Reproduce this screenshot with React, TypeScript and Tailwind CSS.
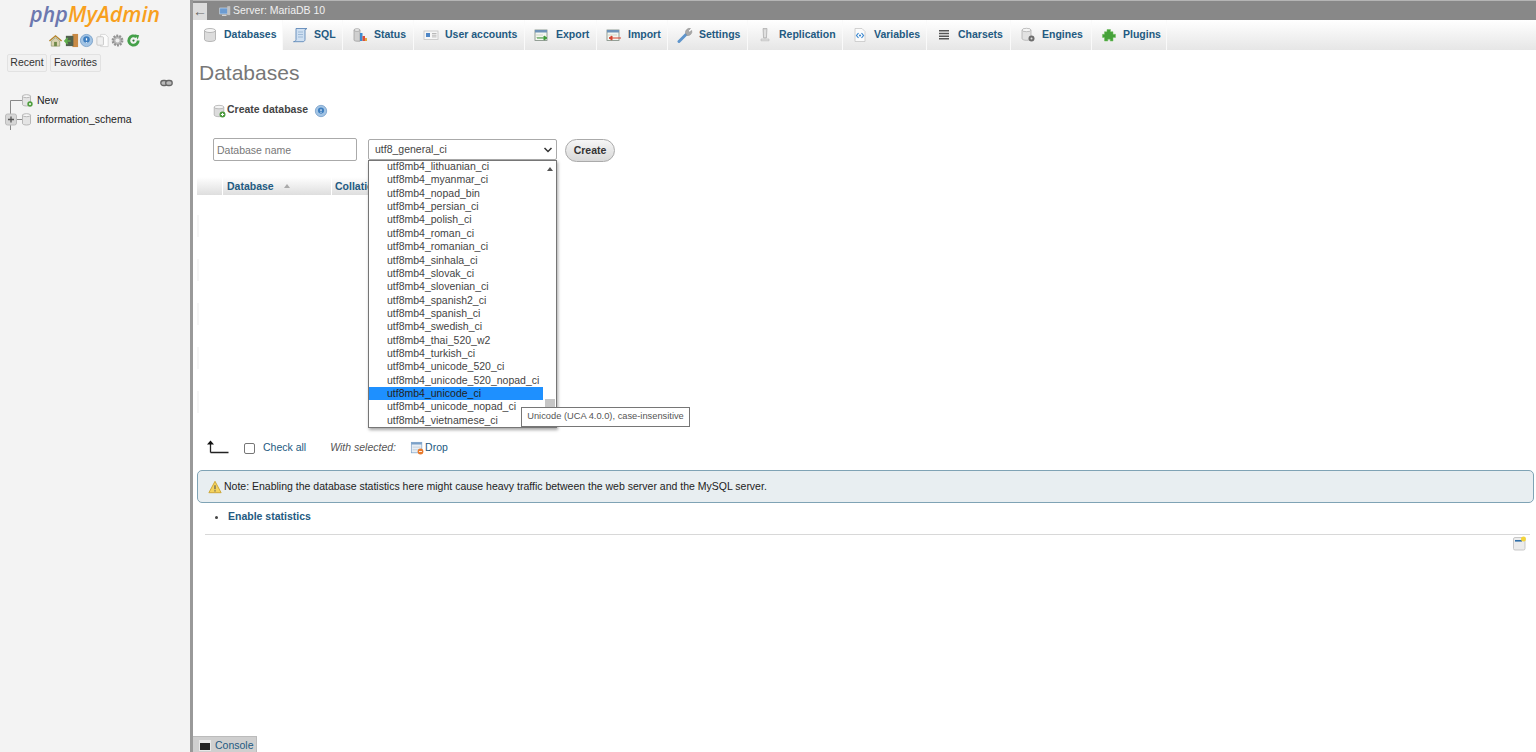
import type { ReactNode } from "react";

const collations = [
  "utf8mb4_lithuanian_ci",
  "utf8mb4_myanmar_ci",
  "utf8mb4_nopad_bin",
  "utf8mb4_persian_ci",
  "utf8mb4_polish_ci",
  "utf8mb4_roman_ci",
  "utf8mb4_romanian_ci",
  "utf8mb4_sinhala_ci",
  "utf8mb4_slovak_ci",
  "utf8mb4_slovenian_ci",
  "utf8mb4_spanish2_ci",
  "utf8mb4_spanish_ci",
  "utf8mb4_swedish_ci",
  "utf8mb4_thai_520_w2",
  "utf8mb4_turkish_ci",
  "utf8mb4_unicode_520_ci",
  "utf8mb4_unicode_520_nopad_ci",
  "utf8mb4_unicode_ci",
  "utf8mb4_unicode_nopad_ci",
  "utf8mb4_vietnamese_ci",
];

function Svg({ size = 14, children, className = "" }: { size?: number; children: ReactNode; className?: string }) {
  return (
    <svg width={size} height={size} viewBox="0 0 16 16" className={`shrink-0 ${className}`}>
      {children}
    </svg>
  );
}

function DbShape() {
  return (
    <>
      <path d="M2.500 3.500v9c0 1.200 2.400 2 5.500 2s5.500-.8 5.500-2v-9z" fill="#dcdcdc" stroke="#a8a8a8" strokeWidth="0.8" />
      <ellipse cx="8" cy="3.500" rx="5.500" ry="2" fill="#f4f4f4" stroke="#a8a8a8" strokeWidth="0.8" />
    </>
  );
}

function DbNewIcon({ size = 14 }: { size?: number }) {
  return (
    <Svg size={size} className="mt-[2px]">
      <DbShape />
      <circle cx="12" cy="12" r="3.400" fill="#4c9a3c" />
      <path d="M10.200 12h3.600M12 10.200v3.600" stroke="#fff" strokeWidth="1.200" />
    </Svg>
  );
}

const tabIcons: Record<string, ReactNode> = {
  Databases: <DbShape />,
  SQL: (
    <>
      <path d="M4 1.500h11l-2 1.200v10c0 1-1 2-2 2H1.500c1 0 2.500-1 2.500-2z" fill="#cfe0f2" stroke="#5f88b8" strokeWidth="0.9" />
      <path d="M6 5h5M6 7.500h5M6 10h5" stroke="#8aa9cc" strokeWidth="0.7" />
    </>
  ),
  Status: (
    <>
      <path d="M2 3v10c0 .8 1.300 1.200 3 1.200h3V3z" fill="#cfcfcf" stroke="#9a9a9a" strokeWidth="0.7" />
      <ellipse cx="5" cy="3" rx="3" ry="1.300" fill="#eee" stroke="#9a9a9a" strokeWidth="0.7" />
      <rect x="8" y="6" width="2.500" height="8" fill="#3d8bd0" />
      <rect x="10.500" y="9" width="2.500" height="5" fill="#d9503f" />
      <rect x="13" y="11" width="2" height="3" fill="#e8a33a" />
    </>
  ),
  "User accounts": (
    <>
      <rect x="1" y="4" width="14" height="8.500" fill="#f6f6f6" stroke="#c4c4c4" strokeWidth="0.8" />
      <rect x="3" y="6" width="4" height="4" fill="#4f86c6" />
      <path d="M9 6.500h4.500M9 8.200h4.500M9 9.900h4.500" stroke="#aaa" strokeWidth="0.8" />
    </>
  ),
  Export: (
    <>
      <rect x="1" y="3" width="12" height="10.500" fill="#f4f6f0" stroke="#7d8a80" strokeWidth="0.8" />
      <rect x="1" y="3" width="12" height="2.500" fill="#6f93b8" />
      <path d="M2 8h7M2 10.500h7" stroke="#c0c8b8" strokeWidth="0.7" />
      <path d="M3 11h9M10 9l3 2-3 2z" stroke="#3f9a3a" fill="#3f9a3a" strokeWidth="1" />
    </>
  ),
  Import: (
    <>
      <rect x="1" y="3" width="12" height="10.500" fill="#f4f6f0" stroke="#7d8a80" strokeWidth="0.8" />
      <rect x="1" y="3" width="12" height="2.500" fill="#6f93b8" />
      <path d="M2 8h9" stroke="#c0c8b8" strokeWidth="0.7" />
      <path d="M5 11h10M6 9l-3 2 3 2z" stroke="#d5432f" fill="#d5432f" strokeWidth="1" />
    </>
  ),
  Settings: (
    <>
      <path d="M2 14.500 9 7.500" stroke="#5f95cc" strokeWidth="3" strokeLinecap="round" />
      <path d="M8.500 6a4 4 0 0 1 5-4.500l-2.200 2.200 1.200 1.500 2.200-1.800A4 4 0 0 1 10 8.500z" fill="#a9a9a9" stroke="#888" strokeWidth="0.5" />
    </>
  ),
  Replication: (
    <>
      <path d="M6 1.500h4l-.6 9.500H6.600z" fill="#d4d4d4" stroke="#a9a9a9" strokeWidth="0.7" />
      <path d="M4 12h8v1.800H4z" fill="#e2e2e2" stroke="#b5b5b5" strokeWidth="0.6" />
      <path d="M8 3v7" stroke="#f2f2f2" strokeWidth="0.8" />
    </>
  ),
  Variables: (
    <>
      <path d="M3 1.500h7l3 3v10H3z" fill="#fbfbfb" stroke="#c6c6c6" strokeWidth="0.8" />
      <path d="M6.500 6 4.500 8.500l2 2.500M9.500 6l2 2.500-2 2.500" fill="none" stroke="#3c88d0" strokeWidth="1.200" />
      <circle cx="8" cy="8.500" r="1.100" fill="#3c88d0" />
    </>
  ),
  Charsets: (
    <path d="M3 3h10v1.500H3zM3 5.700h10v1.500H3zM3 8.400h10v1.500H3zM3 11.100h10v1.500H3z" fill="#555" />
  ),
  Engines: (
    <>
      <path d="M2 3v8.500c0 1 2 1.800 4.500 1.800S11 12.500 11 11.500V3z" fill="#e2e2e2" stroke="#a8a8a8" strokeWidth="0.7" />
      <ellipse cx="6.500" cy="3" rx="4.500" ry="1.700" fill="#f6f6f6" stroke="#a8a8a8" strokeWidth="0.7" />
      <circle cx="11.500" cy="11.500" r="3" fill="#6d6d6d" />
      <circle cx="11.500" cy="11.500" r="1" fill="#ddd" />
    </>
  ),
  Plugins: (
    <path d="M6 2.500h3.500v2.200h2.500v2.600h2.500v3.200H12v3.500H9.200v-1.800H6.800V14H3.500v-3.500H1.500V7.300h2V4.700H6z" fill="#46a23a" stroke="#6ebe5e" strokeWidth="0.5" />
  ),
};

const tabs = [
  { label: "Databases", w: "w-[90px]" },
  { label: "SQL", w: "w-[60px]" },
  { label: "Status", w: "w-[71px]" },
  { label: "User accounts", w: "w-[111px]" },
  { label: "Export", w: "w-[72px]" },
  { label: "Import", w: "w-[71px]" },
  { label: "Settings", w: "w-[80px]" },
  { label: "Replication", w: "w-[95px]" },
  { label: "Variables", w: "w-[84px]" },
  { label: "Charsets", w: "w-[84px]" },
  { label: "Engines", w: "w-[81px]" },
  { label: "Plugins", w: "w-[75px]" },
];

function Sidebar() {
  return (
    <aside className="w-[190px] shrink-0 border-r-[3px] border-[#999] bg-[#f3f3f3] box-content">
      <div className="flex h-[28px] items-center justify-center text-[21.500px] font-semibold italic leading-none [font-family:'Open_Sans',sans-serif]">
        <span className="text-[#6c78af]">php</span>
        <span className="text-[#f8a01e]">MyAdmin</span>
      </div>
      <div className="mt-[5px] flex h-[15px] items-center justify-center gap-[0.6px] pr-[1px]">
        <Svg size={15}>
          <path d="M1 8 8 2l7 6-1 1-6-5-6 5z" fill="#b5852d" />
          <path d="M3.500 8.500 8 5l4.500 3.500V14h-9z" fill="#d9d2b0" stroke="#7d8a5a" strokeWidth="0.6" />
          <rect x="6.500" y="9.500" width="3" height="4.500" fill="#6f8a4a" />
        </Svg>
        <Svg size={15}>
          <rect x="9" y="1" width="6" height="14" fill="#c98a45" />
          <rect x="2" y="3" width="8" height="11" fill="#50604e" />
          <path d="M1 8.500h6M4 5.500 1 8.500l3 3" stroke="#5fb04a" strokeWidth="1.800" fill="none" />
        </Svg>
        <Svg size={15}>
          <circle cx="8" cy="8" r="6.500" fill="#a3c4e4" stroke="#6b97c4" strokeWidth="0.8" />
          <circle cx="8" cy="7" r="3.500" fill="#3f7fc0" />
          <path d="M8 5.500v2.500M8 9.500v1" stroke="#fff" strokeWidth="1.300" />
        </Svg>
        <Svg size={15}>
          <path d="M6 1.500h5l3 3v10H6z" fill="#fcfcfc" stroke="#cfcfcf" strokeWidth="0.8" />
          <rect x="2" y="4" width="7" height="9" rx="1" fill="#f0f0f0" stroke="#bdbdbd" strokeWidth="0.8" />
        </Svg>
        <Svg size={15}>
          <circle cx="8" cy="8" r="5" fill="#b8b8b8" stroke="#939393" strokeWidth="2.600" strokeDasharray="2 1.100" />
          <circle cx="8" cy="8" r="2.200" fill="#efefef" />
        </Svg>
        <Svg size={15}>
          <path d="M13 8a5 5 0 1 1-2-4" fill="none" stroke="#44a049" strokeWidth="3" />
          <path d="M9.500 1.500 14 2.500l-1.500 4.300z" fill="#44a049" />
          <circle cx="8" cy="8" r="1.200" fill="#2f7d35" />
        </Svg>
      </div>
      <div className="mt-[6px] flex gap-[3px] pl-[7px]">
        <SideButton label="Recent" width="w-[40px]" />
        <SideButton label="Favorites" width="w-[51px]" />
      </div>
      <div className="mt-[4px] flex h-[14px] justify-end pr-[17px]">
        <svg width="13" height="14" viewBox="0 0 13 14">
          <rect x="0.800" y="4.500" width="6.500" height="5" rx="2.500" fill="#bbb" stroke="#666" strokeWidth="1.300" />
          <rect x="5.700" y="4.500" width="6.500" height="5" rx="2.500" fill="#bbb" stroke="#666" strokeWidth="1.300" />
        </svg>
      </div>
      <div className="mt-[2px]">
        <TreeRow label="New" first />
        <TreeRow label="information_schema" />
      </div>
    </aside>
  );
}

function SideButton({ label, width }: { label: string; width: string }) {
  return (
    <div className={`${width} flex h-[18px] items-center justify-center rounded-[2px] border border-[#e2e2e2] bg-[#f1f1f1] text-[10.500px] text-[#333]`}>
      {label}
    </div>
  );
}

function TreeRow({ label, first = false }: { label: string; first?: boolean }) {
  return (
    <div className={`flex items-center ${first ? "h-[17px]" : "h-[21px]"} text-[10.500px] text-[#222]`}>
      <svg width="37" height={first ? 17 : 21} viewBox={first ? "0 0 37 17" : "0 0 37 21"} className="shrink-0">
        {first ? (
          <>
            <path d="M10.500 17V8.500H22" fill="none" stroke="#888" />
            <g transform="translate(21 2)">
              <path d="M1.500 2v8.500c0 .8 1.700 1.500 4 1.500s4-.7 4-1.500V2z" fill="#e4e4e4" stroke="#aaa" strokeWidth="0.800" />
              <ellipse cx="5.500" cy="2.200" rx="4" ry="1.500" fill="#f6f6f6" stroke="#aaa" strokeWidth="0.800" />
              <circle cx="9" cy="10" r="2.700" fill="#4f9e3f" />
              <circle cx="9" cy="10" r="1" fill="#fff" />
            </g>
          </>
        ) : (
          <>
            <path d="M10.500 0V21M17 10.500H22" fill="none" stroke="#888" />
            <rect x="5.500" y="5" width="11" height="11" rx="2" fill="#d6d6d6" stroke="#bcbcbc" />
            <path d="M8 10.500h6M11 7.500v6" stroke="#555" strokeWidth="1.300" />
            <g transform="translate(21 4)">
              <path d="M1.500 2v8.500c0 .8 1.700 1.500 4 1.500s4-.7 4-1.500V2z" fill="#e4e4e4" stroke="#aaa" strokeWidth="0.800" />
              <ellipse cx="5.500" cy="2.200" rx="4" ry="1.500" fill="#f6f6f6" stroke="#aaa" strokeWidth="0.800" />
            </g>
          </>
        )}
      </svg>
      <span>{label}</span>
    </div>
  );
}

function CollationDropdown() {
  return (
    <div className="absolute left-0 top-[21px] z-10 flex h-[268px] w-[189px] border border-[#767676] bg-white shadow-[1px_2px_3px_rgba(0,0,0,0.35)]">
      <ul className="-mt-[1px] w-[174px]">
        {collations.map((name) => (
          <li
            key={name}
            className={`h-[13.370px] pl-[18px] text-[10.500px] leading-[13.370px] ${
              name === "utf8mb4_unicode_ci" ? "bg-[#1e90ff] text-[#222]" : "text-[#444]"
            }`}
          >
            {name}
          </li>
        ))}
      </ul>
      <div className="relative flex-1 bg-white">
        <div className="mx-auto mt-[6px] h-0 w-0 border-x-[3px] border-b-[4px] border-x-transparent border-b-[#555]" />
        <div className="absolute left-[2px] top-[238px] h-[12px] w-[10px] bg-[#c6c6c6]" />
      </div>
    </div>
  );
}

function DatabaseHeader() {
  return (
    <div className="mt-[15px] flex h-[18px] w-[173px] bg-gradient-to-b from-white to-[#dedede] text-[10.500px] font-bold leading-[18px] text-[#235a81]">
      <div className="w-[26px] shrink-0 border-r border-white" />
      <div className="flex w-[108px] shrink-0 items-center pl-[4px]">
        Database
        <span className="ml-[10px] h-0 w-0 border-x-[3px] border-b-[4px] border-x-transparent border-b-[#aaa]" />
      </div>
      <div className="whitespace-nowrap border-l border-white pl-[3px]">Collation</div>
    </div>
  );
}

export default function App() {
  return (
    <div className="flex h-[752px] w-[1536px] overflow-hidden bg-white text-[10.500px] text-[#444] [font-family:'Liberation_Sans',Arial,sans-serif]">
      <Sidebar />
      <main className="relative flex min-w-0 flex-1 flex-col">
        <div className="flex h-[20px] items-center border-t border-[#b5b5b5] bg-[#888] pt-[1px] text-[10.500px] text-[#f0f0f0]">
          <div className="flex h-[17px] w-[14px] items-center justify-center bg-[#dcdcdc] text-[14px] leading-none text-[#666]">←</div>
          <div className="ml-[12px] flex items-center gap-[2px]">
            <Svg size={12}>
              <rect x="1" y="4" width="11" height="8" fill="#6c9bd0" stroke="#d8e4f0" strokeWidth="0.800" />
              <rect x="11" y="1.500" width="4" height="12" fill="#c0c0c0" />
              <rect x="4" y="13" width="6" height="1.500" fill="#ddd" />
            </Svg>
            <span>Server: MariaDB 10</span>
          </div>
        </div>

        <nav className="flex h-[30px] bg-gradient-to-b from-white to-[#e6e6e6]">
          {tabs.map((t, i) => (
            <div
              key={t.label}
              className={`${t.w} flex shrink-0 items-center gap-[6px] border-r border-[#fafafa] pl-[9px] text-[10.500px] font-bold text-[#235a81] ${
                i === 0 ? "bg-white" : ""
              }`}
            >
              <Svg size={16}>{tabIcons[t.label]}</Svg>
              <span className="whitespace-nowrap">{t.label}</span>
            </div>
          ))}
        </nav>

        <div className="pl-[4px]">
          <h1 className="mt-[11px] h-[24px] pl-[2px] text-[21px] font-normal leading-[24px] text-[#777]">Databases</h1>

          <div className="ml-[15px] mt-[18px] flex h-[14px] items-center font-bold">
            <DbNewIcon />
            <span className="ml-px">Create database</span>
            <Svg size={14} className="ml-[6px] mt-[2px]">
              <circle cx="8" cy="8" r="6.500" fill="#a3c4e4" stroke="#6b97c4" strokeWidth="0.800" />
              <circle cx="8" cy="7.500" r="3.500" fill="#3f7fc0" />
              <path d="M8 6v2.300M8 9.300v1" stroke="#fff" strokeWidth="1.200" />
            </Svg>
          </div>

          <div className="ml-[16px] mt-[21px] flex h-[24px] items-start">
            <input
              readOnly
              placeholder="Database name"
              className="h-[23px] w-[144px] rounded-[2px] border border-[#aaa] bg-white px-[3px] text-[10.500px] text-[#444] outline-none placeholder:text-[#777]"
            />
            <div className="relative ml-[11px] mt-[1px]">
              <div className="flex h-[21px] w-[189px] items-center justify-between rounded-[2px] border border-[#aaa] bg-white pl-[6px] pr-[3px] text-[10.500px] text-[#444]">
                utf8_general_ci
                <svg width="10" height="8" viewBox="0 0 10 8">
                  <path d="M1.500 2 5 5.500 8.500 2" fill="none" stroke="#333" strokeWidth="1.500" />
                </svg>
              </div>
              <CollationDropdown />
              <div className="absolute left-[153px] top-[268px] z-20 flex h-[20px] w-[169px] items-center justify-center whitespace-nowrap border border-[#767676] bg-white text-[9.300px] text-[#555]">
                Unicode (UCA 4.0.0), case-insensitive
              </div>
            </div>
            <div className="ml-[8px] mt-[1px] flex h-[23px] w-[50px] items-center justify-center rounded-full border border-[#aaa] bg-gradient-to-b from-[#f6f6f6] to-[#d8d8d8] text-[10.500px] font-bold text-[#333]">
              Create
            </div>
          </div>

          <DatabaseHeader />

          <div className="h-[246px] pt-[20px]">
            <div className="h-[22px] w-[2px] bg-[#f6f6f6]" />
            <div className="mt-[22px] h-[22px] w-[2px] bg-[#f6f6f6]" />
            <div className="mt-[22px] h-[22px] w-[2px] bg-[#f6f6f6]" />
            <div className="mt-[22px] h-[22px] w-[2px] bg-[#f6f6f6]" />
            <div className="mt-[22px] h-[22px] w-[2px] bg-[#f6f6f6]" />
          </div>

          <div className="flex h-[14px] items-center">
            <svg width="23" height="14" viewBox="0 0 23 14" className="ml-[9px] shrink-0 -translate-y-px">
              <path d="M4.500 12.500V3M4.500 12.500H22.500" fill="none" stroke="#222" strokeWidth="1.300" />
              <path d="M1 4.500 4.500 .5 8 4.500z" fill="#111" />
            </svg>
            <span className="ml-[15px] h-[11px] w-[11px] shrink-0 rounded-[2px] border border-[#767676] bg-white" />
            <span className="ml-[8px] text-[#235a81]">Check all</span>
            <span className="ml-[24px] italic text-[#555]">With selected:</span>
            <Svg size={14} className="ml-[14px]">
              <rect x="1.500" y="1.500" width="12" height="12" fill="#e8eef5" stroke="#7aa0c8" strokeWidth="0.800" />
              <rect x="1.500" y="1.500" width="12" height="2.500" fill="#7aa0c8" />
              <path d="M3 7h9M3 10h6" stroke="#b5c5d5" strokeWidth="0.800" />
              <circle cx="12" cy="12" r="3.300" fill="#e8792b" />
              <path d="M10.300 12h3.400" stroke="#fff" strokeWidth="1" />
            </Svg>
            <span className="ml-[1px] text-[#235a81]">Drop</span>
          </div>

          <div className="mt-[15px] mr-[2px] flex h-[33px] items-center rounded-[5px] border border-[#7fa3b5] bg-[#e8eef1] pl-[10px] pt-[1px] text-[#222]">
            <Svg size={14}>
              <path d="M8 1.500 15 14.500H1z" fill="#f4d35e" stroke="#c9a12e" strokeWidth="1" strokeLinejoin="round" />
              <path d="M8 6v4.500M8 11.700v1.300" stroke="#555" strokeWidth="1.300" />
            </Svg>
            <span className="ml-[2px]">Note: Enabling the database statistics here might cause heavy traffic between the web server and the MySQL server.</span>
          </div>

          <ul className="mt-[7px] h-[13px] list-disc pl-[31px] font-bold leading-[13px] text-[#235a81] marker:text-[#444]">
            <li>Enable statistics</li>
          </ul>

          <div className="ml-[8px] mr-[6px] mt-[11px] border-t border-[#d8d8d8]" />
          <div className="mr-[10px] mt-[1px] flex justify-end">
            <svg width="13" height="15" viewBox="0 0 13 15">
              <rect x="0.500" y="1.500" width="11.500" height="12.500" rx="1.500" fill="#ececec" stroke="#bdbdbd" strokeWidth="0.800" />
              <rect x="2" y="4" width="7" height="1.600" fill="#2f6ea8" />
              <circle cx="10.500" cy="3" r="2.500" fill="#f3d43a" />
            </svg>
          </div>
        </div>

        <div className="absolute bottom-0 left-0 flex h-[16px] w-[64px] items-center gap-[4px] border-r border-t border-[#bbb] bg-[#cfcfcf] pl-[6px] pt-[2px] text-[10.500px] text-[#235a81]">
          <svg width="12" height="11" viewBox="0 0 12 11">
            <rect width="12" height="11" fill="#e8e8e8" />
            <rect x="1" y="3" width="10" height="7" fill="#222" />
          </svg>
          Console
        </div>
      </main>
    </div>
  );
}
